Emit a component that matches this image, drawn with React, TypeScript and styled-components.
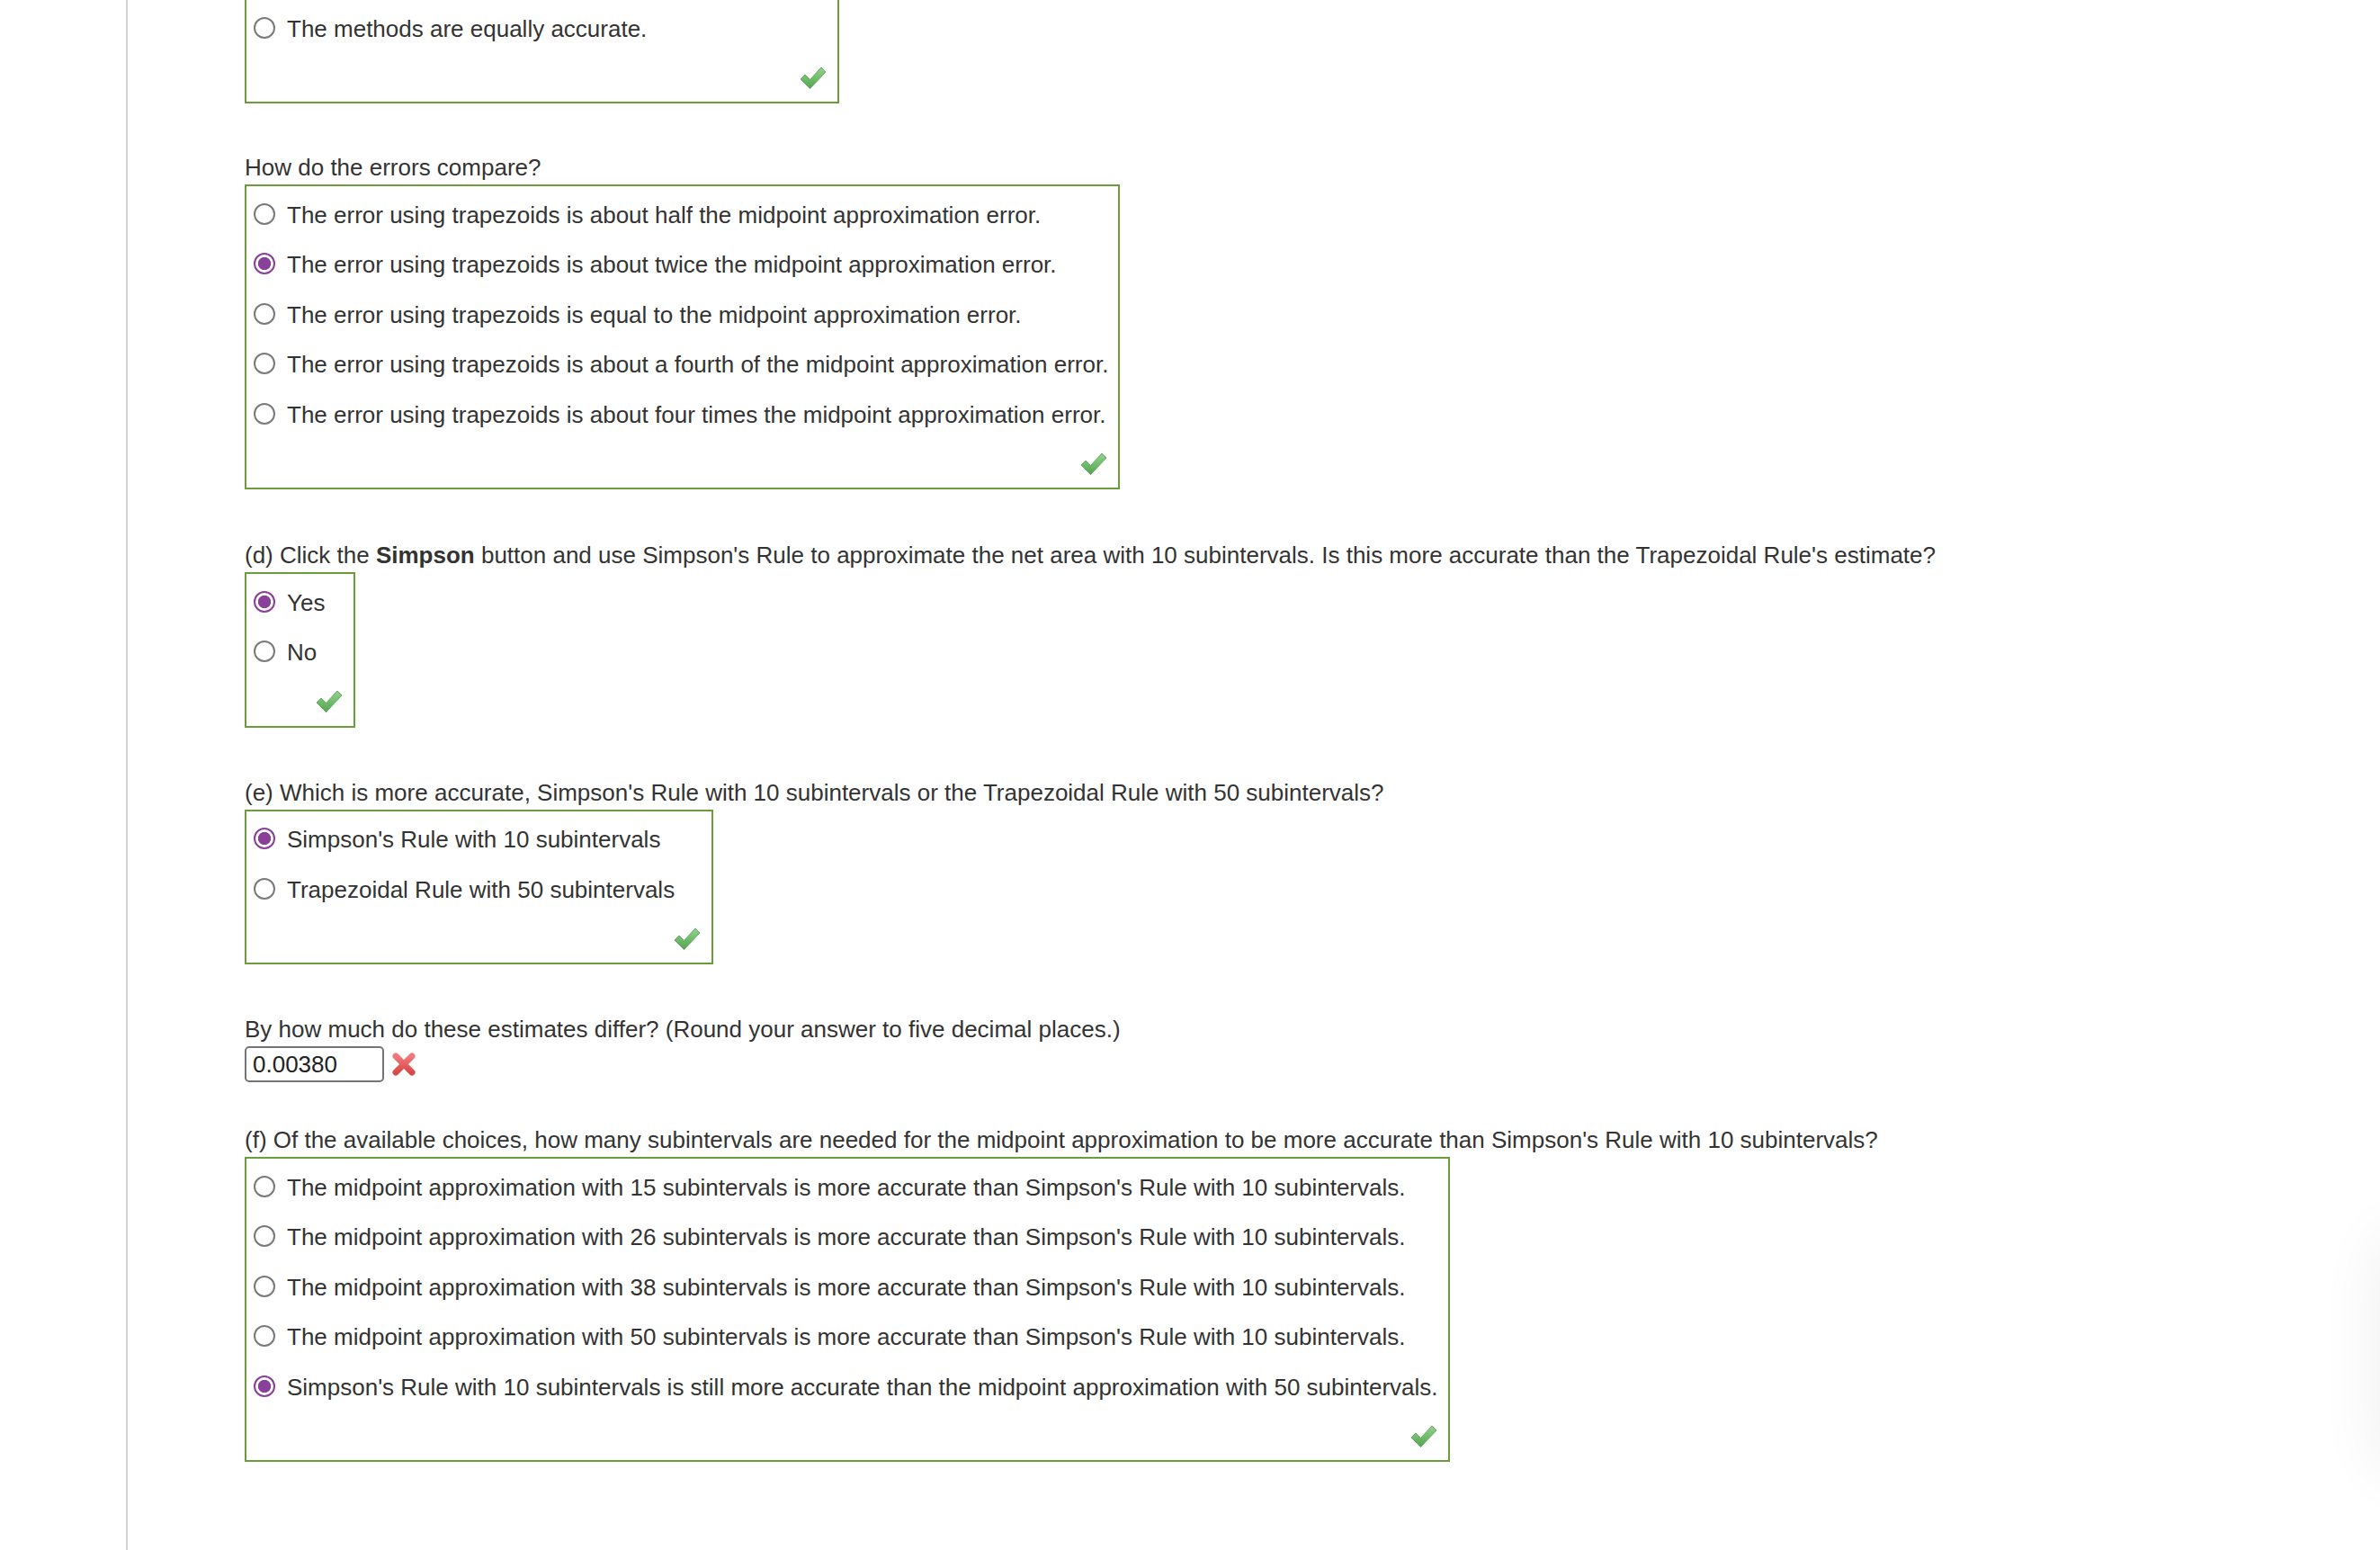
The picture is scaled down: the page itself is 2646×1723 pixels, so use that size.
import styled, { createGlobalStyle } from 'styled-components';

const GlobalStyle = createGlobalStyle`
  html,
  body {
    margin: 0;
    padding: 0;
    background: #fff;
  }

  body {
    font-family: 'Liberation Sans', Arial, Helvetica, sans-serif;
    font-size: 26px;
    color: #333;
    overflow: hidden;
  }
`;

const Page = styled.div`
  display: flex;
  min-height: 1723px;
`;

const Sidebar = styled.div`
  flex: 0 0 140px;
  border-right: 2px solid #d3d3d3;
`;

const Main = styled.main`
  display: flex;
  flex-direction: column;
  align-items: flex-start;
  padding-left: 130px;
`;

const Question = styled.section<{ $gap?: number }>`
  display: flex;
  flex-direction: column;
  align-items: flex-start;
  margin-top: ${({ $gap }) => ($gap ?? 55)}px;
`;

const Label = styled.div`
  line-height: 32px;
  margin-bottom: 3px;
  white-space: nowrap;

  b {
    font-weight: bold;
  }
`;

const Box = styled.div<{ $width: number; $cut?: boolean }>`
  box-sizing: border-box;
  width: ${({ $width }) => $width}px;
  border: 2px solid #6c9d3d;
  border-top: ${({ $cut }) => ($cut ? 'none' : '2px solid #6c9d3d')};
  padding-top: 2px;
  display: flex;
  flex-direction: column;
`;

const Option = styled.label`
  box-sizing: border-box;
  display: flex;
  align-items: center;
  height: 55.5px;
  padding: 4px 0 0 8px;
  gap: 13px;
  white-space: nowrap;
  line-height: 1;
`;

const Radio = styled.span<{ $checked?: boolean }>`
  box-sizing: border-box;
  flex: 0 0 24px;
  width: 24px;
  height: 24px;
  border-radius: 50%;
  border: ${({ $checked }) =>
    $checked ? '2px solid #8a3f98' : '2px solid #7a7a7a'};
  background: ${({ $checked }) =>
    $checked ? 'radial-gradient(circle, #8a3f98 0 6.8px, #fff 7.5px)' : '#fff'};
  margin-top: -2px;
`;

const CheckRow = styled.div`
  box-sizing: border-box;
  display: flex;
  justify-content: flex-end;
  align-items: center;
  height: 55.5px;
  padding: 2px 12px 0 0;
`;

const AnswerRow = styled.div`
  display: flex;
  align-items: center;
  gap: 8px;
  height: 40px;
`;

const Input = styled.div`
  box-sizing: border-box;
  width: 155px;
  height: 40px;
  border: 2px solid #747474;
  border-radius: 5px;
  padding: 0 7px;
  display: flex;
  align-items: center;
  font-size: 26px;
  color: #222;
`;

const EdgeShadow = styled.div`
  position: fixed;
  right: -70px;
  top: 1370px;
  width: 70px;
  height: 270px;
  border-radius: 40px;
  box-shadow: 0 0 70px rgba(0, 0, 0, 0.07);
`;

const Check = () => (
  <svg width="30" height="27" viewBox="0 0 30 27">
    <defs>
      <linearGradient id="chk" x1="0" y1="0" x2="0" y2="1">
        <stop offset="0" stopColor="#93d38e" />
        <stop offset="1" stopColor="#52a54e" />
      </linearGradient>
    </defs>
    <polygon
      points="1,15 6,10 11.5,15.5 24,2 29,7 11.5,25.5"
      fill="url(#chk)"
      stroke="#62ad5e"
      strokeWidth="1"
      strokeLinejoin="round"
    />
  </svg>
);

const Cross = () => (
  <svg width="28" height="28" viewBox="0 0 28 28">
    <defs>
      <linearGradient id="crs" x1="0" y1="0" x2="0" y2="1">
        <stop offset="0" stopColor="#f07a7a" />
        <stop offset="1" stopColor="#d94848" />
      </linearGradient>
    </defs>
    <path
      d="M5 5 L23 23 M23 5 L5 23"
      stroke="url(#crs)"
      strokeWidth="7"
      strokeLinecap="round"
    />
  </svg>
);

type Choice = { text: string; checked?: boolean };

const ChoiceBox = ({
  width,
  choices,
  cut,
}: {
  width: number;
  choices: Choice[];
  cut?: boolean;
}) => (
  <Box $width={width} $cut={cut}>
    {choices.map((c) => (
      <Option key={c.text}>
        <Radio $checked={c.checked} />
        {c.text}
      </Option>
    ))}
    <CheckRow>
      <Check />
    </CheckRow>
  </Box>
);

const errorChoices: Choice[] = [
  { text: 'The error using trapezoids is about half the midpoint approximation error.' },
  { text: 'The error using trapezoids is about twice the midpoint approximation error.', checked: true },
  { text: 'The error using trapezoids is equal to the midpoint approximation error.' },
  { text: 'The error using trapezoids is about a fourth of the midpoint approximation error.' },
  { text: 'The error using trapezoids is about four times the midpoint approximation error.' },
];

const midpointChoices: Choice[] = [
  { text: "The midpoint approximation with 15 subintervals is more accurate than Simpson's Rule with 10 subintervals." },
  { text: "The midpoint approximation with 26 subintervals is more accurate than Simpson's Rule with 10 subintervals." },
  { text: "The midpoint approximation with 38 subintervals is more accurate than Simpson's Rule with 10 subintervals." },
  { text: "The midpoint approximation with 50 subintervals is more accurate than Simpson's Rule with 10 subintervals." },
  {
    text: "Simpson's Rule with 10 subintervals is still more accurate than the midpoint approximation with 50 subintervals.",
    checked: true,
  },
];

export default function App() {
  return (
    <>
      <GlobalStyle />
      <Page>
        <Sidebar />
        <Main>
          <Question $gap={0}>
            <ChoiceBox
              cut
              width={661}
              choices={[{ text: 'The methods are equally accurate.' }]}
            />
          </Question>

          <Question>
            <Label>How do the errors compare?</Label>
            <ChoiceBox width={973} choices={errorChoices} />
          </Question>

          <Question $gap={57}>
            <Label>
              (d) Click the <b>Simpson</b> button and use Simpson's Rule to
              approximate the net area with 10 subintervals. Is this more
              accurate than the Trapezoidal Rule's estimate?
            </Label>
            <ChoiceBox
              width={123}
              choices={[{ text: 'Yes', checked: true }, { text: 'No' }]}
            />
          </Question>

          <Question $gap={56}>
            <Label>
              (e) Which is more accurate, Simpson's Rule with 10 subintervals or
              the Trapezoidal Rule with 50 subintervals?
            </Label>
            <ChoiceBox
              width={521}
              choices={[
                { text: "Simpson's Rule with 10 subintervals", checked: true },
                { text: 'Trapezoidal Rule with 50 subintervals' },
              ]}
            />
          </Question>

          <Question $gap={56}>
            <Label>
              By how much do these estimates differ? (Round your answer to five
              decimal places.)
            </Label>
            <AnswerRow>
              <Input>0.00380</Input>
              <Cross />
            </AnswerRow>
          </Question>

          <Question $gap={48}>
            <Label>
              (f) Of the available choices, how many subintervals are needed for
              the midpoint approximation to be more accurate than Simpson's Rule
              with 10 subintervals?
            </Label>
            <ChoiceBox width={1340} choices={midpointChoices} />
          </Question>
        </Main>
        <EdgeShadow />
      </Page>
    </>
  );
}
